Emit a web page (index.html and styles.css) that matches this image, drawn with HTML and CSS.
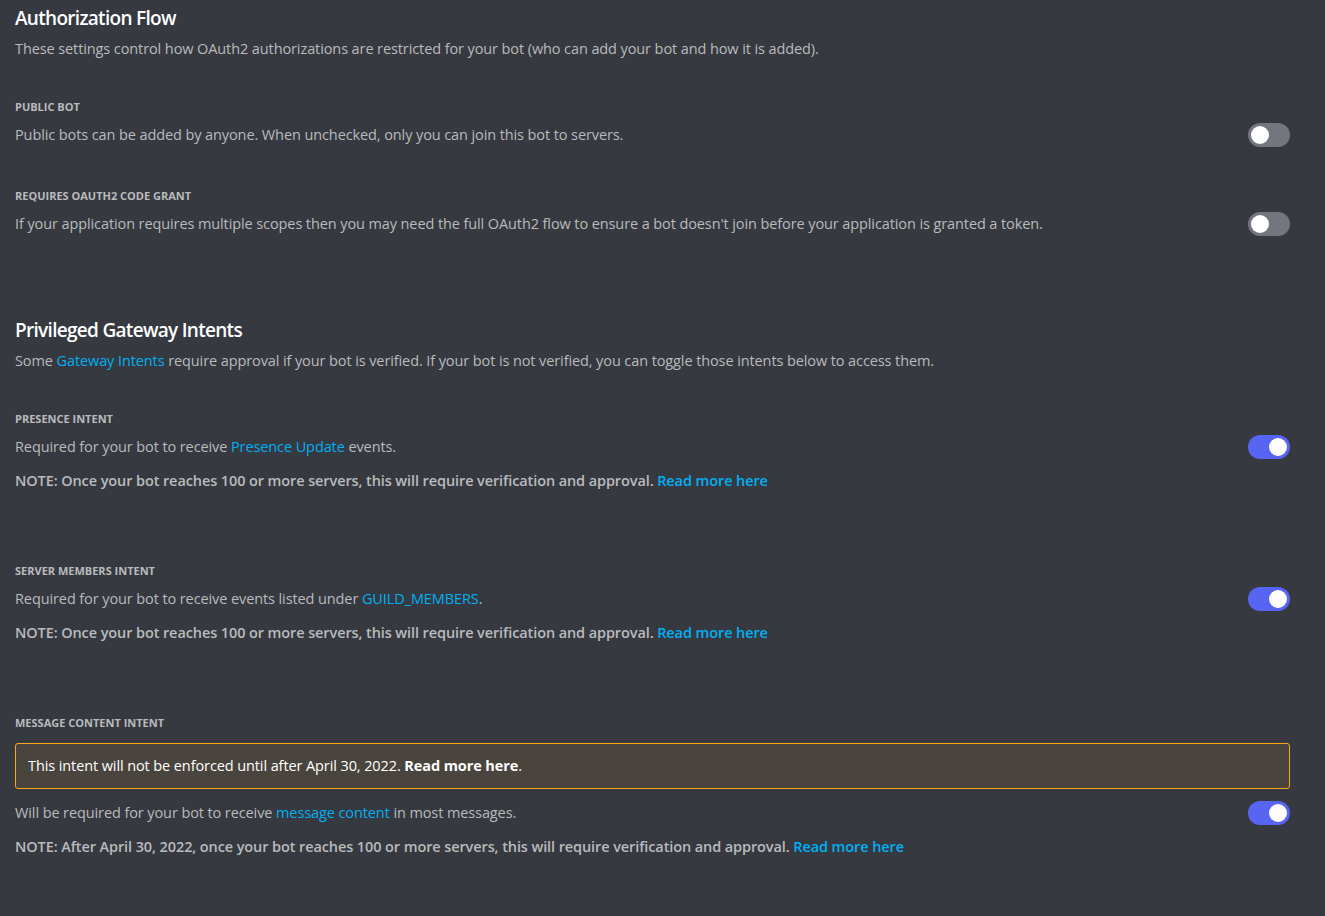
FILE: index.html
```html
<!DOCTYPE html>
<html lang="en">
<head>
<meta charset="utf-8">
<title>Bot Settings</title>
<link rel="stylesheet" href="styles.css">
</head>
<body>
<main class="page">
  <section class="section">
    <h2 class="section-title">Authorization Flow</h2>
    <p class="section-desc">These settings control how OAuth2 authorizations are restricted for your bot (who can add your bot and how it is added).</p>

    <div class="setting setting-first">
      <div class="label">Public Bot</div>
      <div class="row">
        <span class="text">Public bots can be added by anyone. When unchecked, only you can join this bot to servers.</span>
        <span class="toggle"><span class="knob"></span></span>
      </div>
    </div>

    <div class="setting setting-tight">
      <div class="label">Requires OAuth2 Code Grant</div>
      <div class="row">
        <span class="text">If your application requires multiple scopes then you may need the full OAuth2 flow to ensure a bot doesn't join before your application is granted a token.</span>
        <span class="toggle"><span class="knob"></span></span>
      </div>
    </div>
  </section>

  <section class="section section-second">
    <h2 class="section-title">Privileged Gateway Intents</h2>
    <p class="section-desc">Some <a class="link" href="#">Gateway Intents</a> require approval if your bot is verified. If your bot is not verified, you can toggle those intents below to access them.</p>

    <div class="setting setting-first">
      <div class="label">Presence Intent</div>
      <div class="row">
        <span class="text">Required for your bot to receive <a class="link" href="#">Presence Update</a> events.</span>
        <span class="toggle on"><span class="knob"></span></span>
      </div>
      <p class="note">NOTE: Once your bot reaches 100 or more servers, this will require verification and approval. <a class="link" href="#">Read more here</a></p>
    </div>

    <div class="setting setting-wide">
      <div class="label">Server Members Intent</div>
      <div class="row">
        <span class="text">Required for your bot to receive events listed under <a class="link" href="#">GUILD_MEMBERS</a>.</span>
        <span class="toggle on"><span class="knob"></span></span>
      </div>
      <p class="note">NOTE: Once your bot reaches 100 or more servers, this will require verification and approval. <a class="link" href="#">Read more here</a></p>
    </div>

    <div class="setting setting-wide">
      <div class="label">Message Content Intent</div>
      <div class="alert">This intent will not be enforced until after April 30, 2022. <a class="alert-link" href="#">Read more here</a>.</div>
      <div class="row">
        <span class="text">Will be required for your bot to receive <a class="link" href="#">message content</a> in most messages.</span>
        <span class="toggle on"><span class="knob"></span></span>
      </div>
      <p class="note">NOTE: After April 30, 2022, once your bot reaches 100 or more servers, this will require verification and approval. <a class="link" href="#">Read more here</a></p>
    </div>
  </section>
</main>
</body>
</html>
```

FILE: styles.css
```css
* { box-sizing: border-box; }

html, body {
  margin: 0;
  padding: 0;
  background: #36393f;
}

body {
  font-family: "Open Sans", "Noto Sans", sans-serif;
  color: #b9bbbe;
  font-size: 14.5px;
  line-height: 20px;
  letter-spacing: -0.1px;
}

.page {
  padding: 6px 35px 40px 15px;
  display: flex;
  flex-direction: column;
}

.section {
  display: flex;
  flex-direction: column;
}

.section-second {
  margin-top: 82px;
}

.section-title {
  margin: 0;
  font-size: 19px;
  line-height: 24px;
  font-weight: 600;
  letter-spacing: -0.7px;
  color: #ffffff;
}

.section-desc {
  margin: 9px 0 0;
  font-size: 14.5px;
  line-height: 20px;
  color: #b9bbbe;
}

.setting {
  display: flex;
  flex-direction: column;
}

.setting-first { margin-top: 40px; }
.setting-tight { margin-top: 41px; }
.setting-wide { margin-top: 72px; }

.label {
  font-size: 11px;
  line-height: 16px;
  font-weight: 700;
  letter-spacing: 0;
  text-transform: uppercase;
  color: #b9bbbe;
  margin-bottom: 8px;
}

.row {
  display: flex;
  align-items: center;
  justify-content: space-between;
  min-height: 24px;
  gap: 16px;
}

.text {
  font-size: 14.5px;
  line-height: 20px;
}

.link {
  color: #00b0f4;
  text-decoration: none;
}

.note {
  margin: 12px 0 0;
  font-weight: 600;
  font-size: 14.5px;
  line-height: 20px;
  color: #b9bbbe;
}

.toggle {
  flex: none;
  width: 42px;
  height: 24px;
  border-radius: 12px;
  background: #72767d;
  display: flex;
  align-items: center;
  padding: 0 3px;
}

.toggle.on {
  background: #5865f2;
  justify-content: flex-end;
}

.knob {
  width: 18px;
  height: 18px;
  border-radius: 50%;
  background: #ffffff;
}

.alert {
  margin: 4px 0 12px;
  border: 1px solid #faa81a;
  border-radius: 3px;
  background: #49443d;
  padding: 12px 12px;
  color: #ffffff;
  font-size: 14.5px;
  line-height: 20px;
}

.alert-link {
  color: #ffffff;
  font-weight: 700;
  text-decoration: none;
}
```
